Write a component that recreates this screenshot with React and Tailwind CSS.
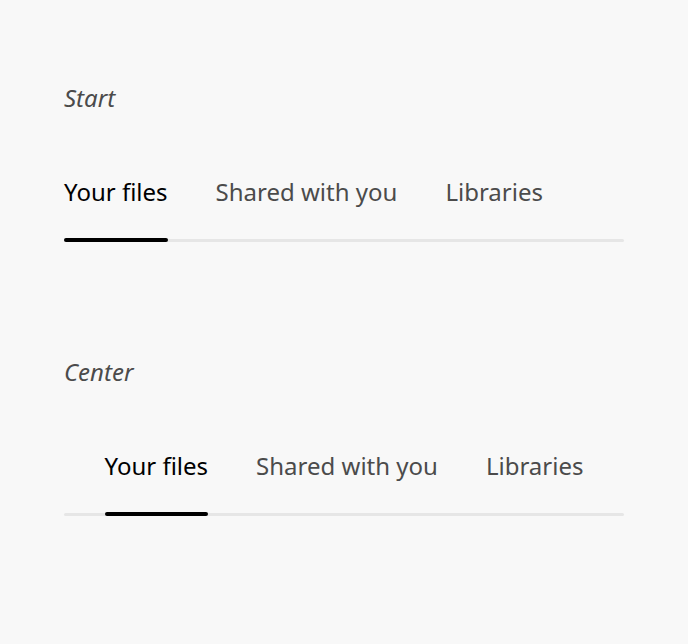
import React, { useState } from 'react';

const tabs = ['Your files', 'Shared with you', 'Libraries'];

function Tabs({ centered }) {
  const [active, setActive] = useState(0);
  return (
    <div className="relative">
      {/* track */}
      <div className="absolute inset-x-0 bottom-0 h-[3px] rounded-full bg-[#e6e6e6]" />
      <div className={`relative flex gap-12 ${centered ? 'justify-center' : 'justify-start'}`}>
        {tabs.map((t, i) => (
          <button
            key={t}
            onClick={() => setActive(i)}
            className="flex flex-col items-stretch cursor-pointer"
          >
            <span
              className={`text-[24px] leading-8 whitespace-nowrap ${
                i === active ? 'text-[#000000]' : 'text-[#4b4b4b]'
              }`}
            >
              {t}
            </span>
            <span
              className={`mt-[30px] h-1 rounded-full ${i === active ? 'bg-black' : 'bg-transparent'}`}
            />
          </button>
        ))}
      </div>
    </div>
  );
}

function Section({ label, centered, className = '' }) {
  return (
    <section className={className}>
      <div className="text-[24px] leading-8 italic text-[#4b4b4b]">{label}</div>
      <div className="mt-[62px]">
        <Tabs centered={centered} />
      </div>
    </section>
  );
}

export default function App() {
  return (
    <div
      className="min-h-screen bg-[#f8f8f8] px-16 pt-[82px]"
      style={{ fontFamily: '"Noto Sans", sans-serif' }}
    >
      <Section label="Start" />
      <Section label="Center" centered className="mt-[114px]" />
    </div>
  );
}
